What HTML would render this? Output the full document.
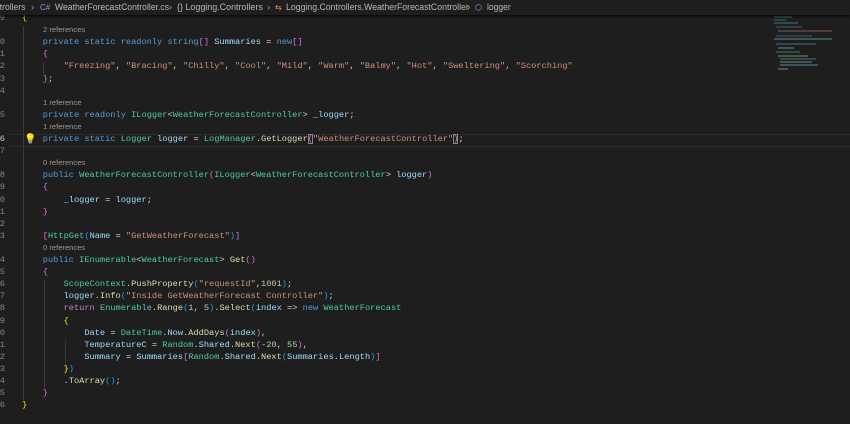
<!DOCTYPE html>
<html><head><meta charset="utf-8"><style>
html,body{margin:0;padding:0;background:#1e1e1e;width:850px;height:424px;overflow:hidden;position:relative}
.bc{position:absolute;left:0;top:0;width:850px;height:15px;background:#1e1e1e;box-shadow:0 1px 3px #000;font:9.6px "Liberation Sans",sans-serif;color:#b8b8b8;white-space:pre;line-height:15px;z-index:3}
.bc span{position:absolute;top:0}
.sq{transform:scaleX(0.89);transform-origin:0 50%}
.row{position:absolute;left:0;height:12.1px;width:850px;line-height:12.1px}
.ln{position:absolute;left:-24px;width:29px;text-align:right;font:8.7px "Liberation Mono",monospace;color:#858585}
.c{position:absolute;left:22px;font:8.67px "Liberation Mono",monospace;color:#d4d4d4;white-space:pre}
.ref{position:absolute;left:43px;font:7.6px "Liberation Sans",sans-serif;color:#999;white-space:pre}
.k{color:#569cd6}.t{color:#4ec9b0}.s{color:#ce9178}.f{color:#dcdcaa}.v{color:#9cdcfe}.n{color:#b5cea8}.r{color:#c586c0}
.b1{color:#ffd700}.b2{color:#da70d6}.b3{color:#179fff}
.g{position:absolute;width:1px;background:#3a3a3a}
.cur{position:absolute;left:10px;width:840px;border-top:1px solid #2c2c2c;border-bottom:1px solid #2c2c2c;box-sizing:border-box}
.bx{outline:1px solid #888;outline-offset:-1px}
.mm{position:absolute;left:772px;top:15px;width:78px;height:60px}
</style></head><body>
<div class="bc"><span class="sq" style="left:-5px">ntrollers</span><span style="left:31px;color:#999">›</span><span style="left:40px;color:#9b8fd0;font-size:8px">C#</span><span class="sq" style="left:55px;transform:scaleX(0.9)">WeatherForecastController.cs</span><span style="left:169px;color:#999">›</span><span class="sq" style="left:177px;transform:scaleX(0.93)">{} Logging.Controllers</span><span style="left:267px;color:#999">›</span><span style="left:275px;color:#e8a33d;font-size:8px">⇆</span><span class="sq" style="left:286px;transform:scaleX(0.91)">Logging.Controllers.WeatherForecastController</span><span style="left:467px;color:#999">›</span><span style="left:475px;color:#75beff;font-size:8px">⬡</span><span class="sq" style="left:487px">logger</span></div>

<div class="cur" style="top:134px;height:13px"></div>
<div class="g" style="left:23px;top:26px;height:374px"></div>
<div class="g" style="left:43px;top:62px;height:12px"></div>
<div class="g" style="left:44px;top:280px;height:108px"></div>
<div class="g" style="left:65px;top:340px;height:36px"></div>

<div class="row" style="top:13px"><span class="ln">9</span><span class="c"><span class="b1">{</span></span></div>
<div class="row" style="top:25.1px"><span class="ref">2 references</span></div>
<div class="row" style="top:37.2px"><span class="ln">10</span><span class="c">    <span class="k">private static readonly string</span><span class="b2">[]</span> <span class="v">Summaries</span> = <span class="k">new</span><span class="b2">[]</span></span></div>
<div class="row" style="top:49.3px"><span class="ln">11</span><span class="c">    <span class="b2">{</span></span></div>
<div class="row" style="top:61.4px"><span class="ln">12</span><span class="c">        <span class="s">"Freezing"</span>, <span class="s">"Bracing"</span>, <span class="s">"Chilly"</span>, <span class="s">"Cool"</span>, <span class="s">"Mild"</span>, <span class="s">"Warm"</span>, <span class="s">"Balmy"</span>, <span class="s">"Hot"</span>, <span class="s">"Sweltering"</span>, <span class="s">"Scorching"</span></span></div>
<div class="row" style="top:73.5px"><span class="ln">13</span><span class="c">    <span class="b2">}</span>;</span></div>
<div class="row" style="top:85.6px"><span class="ln">14</span></div>
<div class="row" style="top:97.7px"><span class="ref">1 reference</span></div>
<div class="row" style="top:109.8px"><span class="ln">15</span><span class="c">    <span class="k">private readonly</span> <span class="t">ILogger</span>&lt;<span class="t">WeatherForecastController</span>&gt; <span class="v">_logger</span>;</span></div>
<div class="row" style="top:121.9px"><span class="ref">1 reference</span></div>
<div class="row" style="top:134px"><span class="ln" style="color:#c6c6c6">16</span><span style="position:absolute;left:24px;top:0;color:#ffcc00;font-size:10px">💡</span><span class="c">    <span class="k">private static</span> <span class="t">Logger</span> <span class="v">logger</span> = <span class="t">LogManager</span>.<span class="f">GetLogger</span><span class="b2 bx">(</span><span class="s">"WeatherForecastController"</span><span class="b2 bx">)</span>;</span></div>
<div class="row" style="top:146.1px"><span class="ln">17</span></div>
<div class="row" style="top:158.2px"><span class="ref">0 references</span></div>
<div class="row" style="top:170.3px"><span class="ln">18</span><span class="c">    <span class="k">public</span> <span class="t">WeatherForecastController</span><span class="b2">(</span><span class="t">ILogger</span>&lt;<span class="t">WeatherForecastController</span>&gt; <span class="v">logger</span><span class="b2">)</span></span></div>
<div class="row" style="top:182.4px"><span class="ln">19</span><span class="c">    <span class="b2">{</span></span></div>
<div class="row" style="top:194.5px"><span class="ln">20</span><span class="c">        <span class="v">_logger</span> = <span class="v">logger</span>;</span></div>
<div class="row" style="top:206.6px"><span class="ln">21</span><span class="c">    <span class="b2">}</span></span></div>
<div class="row" style="top:218.7px"><span class="ln">22</span></div>
<div class="row" style="top:230.8px"><span class="ln">23</span><span class="c">    <span class="b2">[</span><span class="t">HttpGet</span><span class="b3">(</span><span class="v">Name</span> = <span class="s">"GetWeatherForecast"</span><span class="b3">)</span><span class="b2">]</span></span></div>
<div class="row" style="top:242.9px"><span class="ref">0 references</span></div>
<div class="row" style="top:255px"><span class="ln">24</span><span class="c">    <span class="k">public</span> <span class="t">IEnumerable</span>&lt;<span class="t">WeatherForecast</span>&gt; <span class="f">Get</span><span class="b2">()</span></span></div>
<div class="row" style="top:267.1px"><span class="ln">25</span><span class="c">    <span class="b2">{</span></span></div>
<div class="row" style="top:279.2px"><span class="ln">26</span><span class="c">        <span class="t">ScopeContext</span>.<span class="f">PushProperty</span><span class="b3">(</span><span class="s">"requestId"</span>,<span class="n">1001</span><span class="b3">)</span>;</span></div>
<div class="row" style="top:291.3px"><span class="ln">27</span><span class="c">        <span class="v">logger</span>.<span class="f">Info</span><span class="b3">(</span><span class="s">"Inside GetWeatherForecast Controller"</span><span class="b3">)</span>;</span></div>
<div class="row" style="top:303.4px"><span class="ln">28</span><span class="c">        <span class="r">return</span> <span class="t">Enumerable</span>.<span class="f">Range</span><span class="b3">(</span><span class="n">1</span>, <span class="n">5</span><span class="b3">)</span>.<span class="f">Select</span><span class="b3">(</span><span class="v">index</span> =&gt; <span class="k">new</span> <span class="t">WeatherForecast</span></span></div>
<div class="row" style="top:315.5px"><span class="ln">29</span><span class="c">        <span class="b1">{</span></span></div>
<div class="row" style="top:327.6px"><span class="ln">30</span><span class="c">            <span class="v">Date</span> = <span class="t">DateTime</span>.<span class="v">Now</span>.<span class="f">AddDays</span><span class="b2">(</span><span class="v">index</span><span class="b2">)</span>,</span></div>
<div class="row" style="top:339.7px"><span class="ln">31</span><span class="c">            <span class="v">TemperatureC</span> = <span class="t">Random</span>.<span class="v">Shared</span>.<span class="f">Next</span><span class="b2">(</span>-<span class="n">20</span>, <span class="n">55</span><span class="b2">)</span>,</span></div>
<div class="row" style="top:351.8px"><span class="ln">32</span><span class="c">            <span class="v">Summary</span> = <span class="v">Summaries</span><span class="b2">[</span><span class="t">Random</span>.<span class="v">Shared</span>.<span class="f">Next</span><span class="b3">(</span><span class="v">Summaries</span>.<span class="v">Length</span><span class="b3">)</span><span class="b2">]</span></span></div>
<div class="row" style="top:363.9px"><span class="ln">33</span><span class="c">        <span class="b1">}</span><span class="b3">)</span></span></div>
<div class="row" style="top:376px"><span class="ln">34</span><span class="c">        .<span class="f">ToArray</span><span class="b3">()</span>;</span></div>
<div class="row" style="top:388.1px"><span class="ln">35</span><span class="c">    <span class="b2">}</span></span></div>
<div class="row" style="top:400.2px"><span class="ln">36</span><span class="c"><span class="b1">}</span></span></div>

<svg class="mm" viewBox="0 0 78 60">
<g stroke-width="1" opacity="0.55">
<line x1="2" y1="2" x2="20" y2="2" stroke="#4ec9b0"/>
<line x1="2" y1="5" x2="14" y2="5" stroke="#569cd6"/>
<line x1="2" y1="8" x2="26" y2="8" stroke="#4ec9b0"/>
<line x1="4" y1="12" x2="30" y2="12" stroke="#569cd6"/>
<line x1="6" y1="16" x2="60" y2="16" stroke="#ce9178"/>
<line x1="4" y1="21" x2="40" y2="21" stroke="#569cd6"/>
<line x1="2" y1="24" x2="60" y2="24" stroke="#9cdcfe"/>
<line x1="4" y1="29" x2="44" y2="29" stroke="#4ec9b0"/>
<line x1="6" y1="33" x2="22" y2="33" stroke="#9cdcfe"/>
<line x1="4" y1="37" x2="28" y2="37" stroke="#4ec9b0"/>
<line x1="6" y1="41" x2="36" y2="41" stroke="#dcdcaa"/>
<line x1="8" y1="44" x2="44" y2="44" stroke="#4ec9b0"/>
<line x1="8" y1="47" x2="40" y2="47" stroke="#9cdcfe"/>
<line x1="8" y1="50" x2="46" y2="50" stroke="#9cdcfe"/>
<line x1="6" y1="54" x2="16" y2="54" stroke="#dcdcaa"/>
</g></svg>
</body></html>
